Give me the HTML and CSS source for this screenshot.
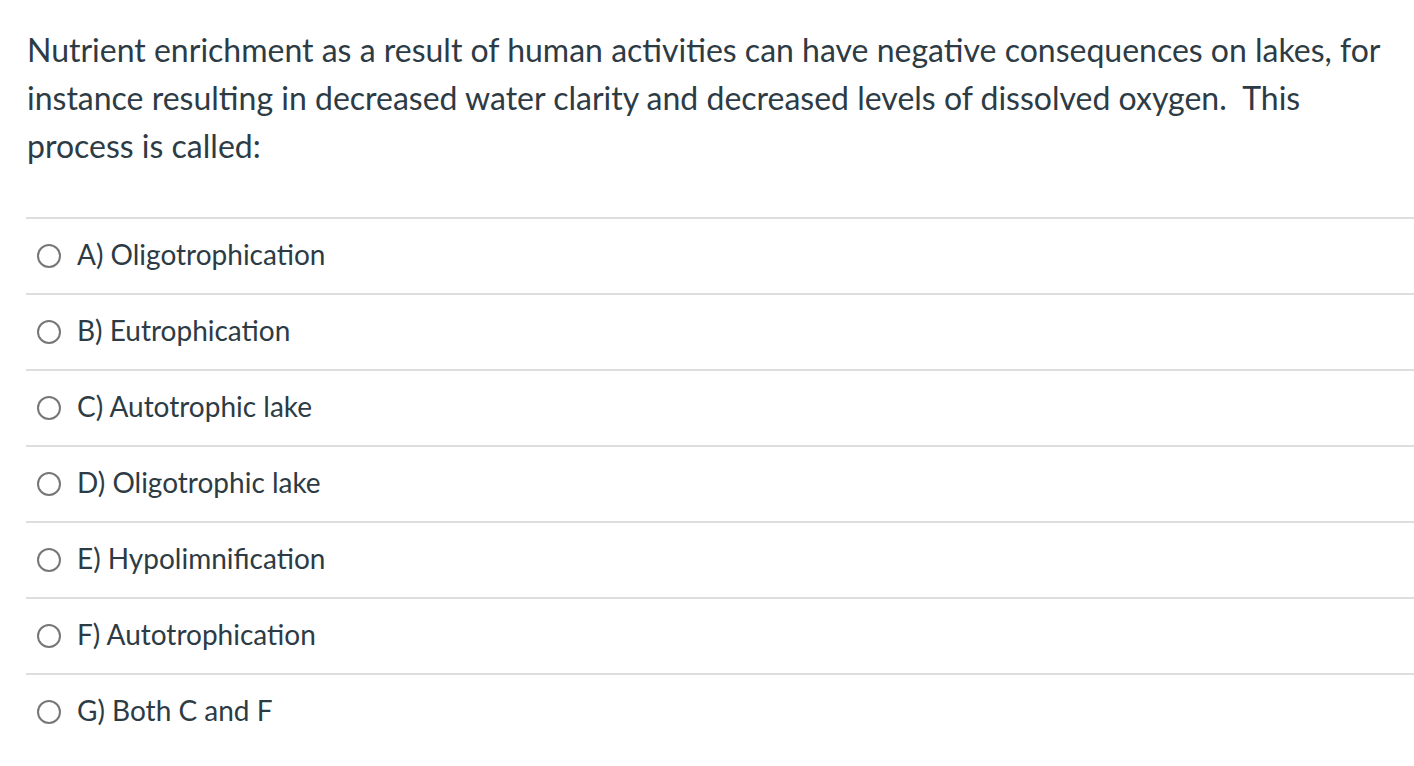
FILE: index.html
```html
<!DOCTYPE html>
<html>
<head>
<meta charset="utf-8">
<link rel="stylesheet" href="styles.css">
</head>
<body>
<div class="quiz">
  <div class="question">Nutrient enrichment as a result of human activities can have negative consequences on lakes, for instance resulting in decreased water clarity and decreased levels of dissolved oxygen.&nbsp; This process is called:</div>
  <div class="answers">
    <label class="answer"><span class="radio"></span><span class="label">A) Oligotrophication</span></label>
    <label class="answer"><span class="radio"></span><span class="label">B) Eutrophication</span></label>
    <label class="answer"><span class="radio"></span><span class="label">C) Autotrophic lake</span></label>
    <label class="answer"><span class="radio"></span><span class="label">D) Oligotrophic lake</span></label>
    <label class="answer"><span class="radio"></span><span class="label">E) Hypolimnification</span></label>
    <label class="answer"><span class="radio"></span><span class="label">F) Autotrophication</span></label>
    <label class="answer"><span class="radio"></span><span class="label">G) Both C and F</span></label>
  </div>
</div>
</body>
</html>
```
FILE: styles.css
```css
html, body {
  margin: 0;
  padding: 0;
  background: #ffffff;
}
body {
  font-family: Lato, "Liberation Sans", sans-serif;
  color: #2d3b45;
}
.quiz {
  padding: 26px 0 0 26px;
}
.question {
  font-size: 32px;
  line-height: 48px;
  padding-left: 1px;
  padding-right: 10px;
  margin-bottom: 47px;
}
.answers {
  display: flex;
  flex-direction: column;
}
.answer {
  display: flex;
  align-items: center;
  height: 74px;
  box-sizing: content-box;
  border-top: 2px solid #dddddd;
  padding-left: 11px;
}
.radio {
  width: 24px;
  height: 24px;
  box-sizing: border-box;
  border: 2px solid #777777;
  border-radius: 50%;
  margin-right: 16px;
  margin-bottom: 0;
  flex: none;
}
.label {
  font-size: 28px;
  margin-bottom: 5px;
}
```
